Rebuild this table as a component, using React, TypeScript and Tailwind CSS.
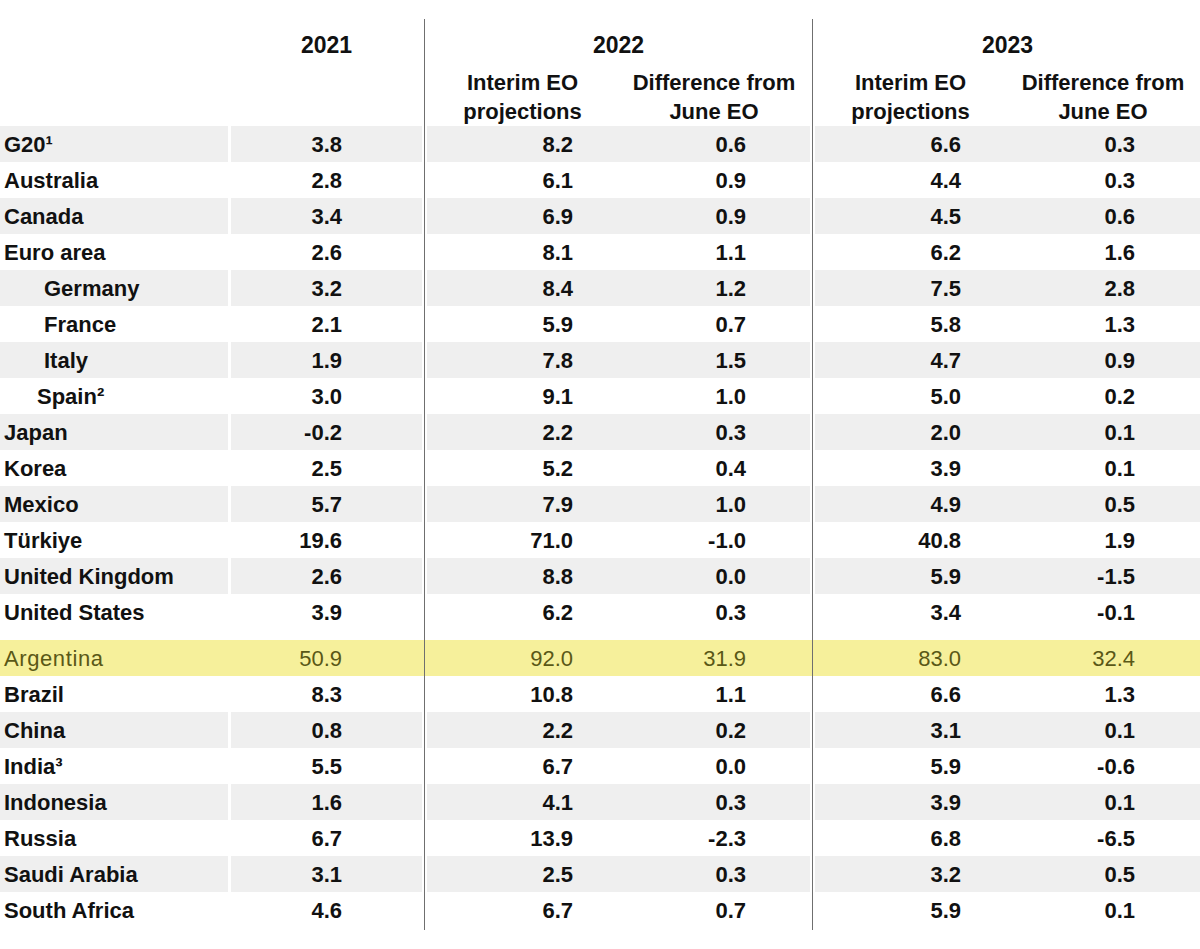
import React from "react";

type Row = {
  label: string;
  indent?: number;
  v: [string, string, string, string, string];
  shade: "gray" | "white" | "yellow";
};

const top: Row[] = [
  { label: "G20¹", v: ["3.8", "8.2", "0.6", "6.6", "0.3"], shade: "gray" },
  { label: "Australia", v: ["2.8", "6.1", "0.9", "4.4", "0.3"], shade: "white" },
  { label: "Canada", v: ["3.4", "6.9", "0.9", "4.5", "0.6"], shade: "gray" },
  { label: "Euro area", v: ["2.6", "8.1", "1.1", "6.2", "1.6"], shade: "white" },
  { label: "Germany", indent: 1, v: ["3.2", "8.4", "1.2", "7.5", "2.8"], shade: "gray" },
  { label: "France", indent: 1, v: ["2.1", "5.9", "0.7", "5.8", "1.3"], shade: "white" },
  { label: "Italy", indent: 1, v: ["1.9", "7.8", "1.5", "4.7", "0.9"], shade: "gray" },
  { label: "Spain²", indent: 2, v: ["3.0", "9.1", "1.0", "5.0", "0.2"], shade: "white" },
  { label: "Japan", v: ["-0.2", "2.2", "0.3", "2.0", "0.1"], shade: "gray" },
  { label: "Korea", v: ["2.5", "5.2", "0.4", "3.9", "0.1"], shade: "white" },
  { label: "Mexico", v: ["5.7", "7.9", "1.0", "4.9", "0.5"], shade: "gray" },
  { label: "Türkiye", v: ["19.6", "71.0", "-1.0", "40.8", "1.9"], shade: "white" },
  { label: "United Kingdom", v: ["2.6", "8.8", "0.0", "5.9", "-1.5"], shade: "gray" },
  { label: "United States", v: ["3.9", "6.2", "0.3", "3.4", "-0.1"], shade: "white" },
];

const bottom: Row[] = [
  { label: "Argentina", v: ["50.9", "92.0", "31.9", "83.0", "32.4"], shade: "yellow" },
  { label: "Brazil", v: ["8.3", "10.8", "1.1", "6.6", "1.3"], shade: "white" },
  { label: "China", v: ["0.8", "2.2", "0.2", "3.1", "0.1"], shade: "gray" },
  { label: "India³", v: ["5.5", "6.7", "0.0", "5.9", "-0.6"], shade: "white" },
  { label: "Indonesia", v: ["1.6", "4.1", "0.3", "3.9", "0.1"], shade: "gray" },
  { label: "Russia", v: ["6.7", "13.9", "-2.3", "6.8", "-6.5"], shade: "white" },
  { label: "Saudi Arabia", v: ["3.1", "2.5", "0.3", "3.2", "0.5"], shade: "gray" },
  { label: "South Africa", v: ["4.6", "6.7", "0.7", "5.9", "0.1"], shade: "white" },
];

function Line() {
  return <div className="w-px self-stretch bg-[#6f6f6f]" />;
}

function DataRow({ r }: { r: Row }) {
  const yellow = r.shade === "yellow";
  const cellBg = r.shade === "gray" ? "bg-[#efefef]" : "";
  const rowCls = yellow
    ? "flex h-[36px] bg-[#f6f09b] text-[#5a5817] font-normal"
    : "flex h-[36px]";
  const padL = r.indent === 1 ? "pl-[44px]" : r.indent === 2 ? "pl-[37px]" : "pl-[4px]";
  return (
    <div className={rowCls}>
      <div className={`w-[228px] flex items-center ${padL} ${cellBg} ${yellow ? "tracking-[0.6px]" : ""}`}>
        {r.label}
      </div>
      <div className="w-[3px]" />
      <div className={`w-[191px] flex items-center justify-end pr-[80px] ${cellBg}`}>{r.v[0]}</div>
      <div className="w-[2px]" />
      <Line />
      <div className="w-[2px]" />
      <div className={`w-[191px] flex items-center justify-end pr-[45px] ${cellBg}`}>{r.v[1]}</div>
      <div className={`w-[192px] flex items-center justify-end pr-[64px] ${cellBg}`}>{r.v[2]}</div>
      <div className="w-[2px]" />
      <Line />
      <div className="w-[2px]" />
      <div className={`w-[191px] flex items-center justify-end pr-[45px] ${cellBg}`}>{r.v[3]}</div>
      <div className={`w-[194px] flex items-center justify-end pr-[65px] ${cellBg}`}>{r.v[4]}</div>
    </div>
  );
}

function SubHead() {
  return (
    <div className="flex mt-[10px] leading-[29px]">
      <div className="w-[191px] text-center">
        <div>Interim EO</div>
        <div>projections</div>
      </div>
      <div className="flex-1 text-center">
        <div>Difference from</div>
        <div>June EO</div>
      </div>
    </div>
  );
}

export default function App() {
  return (
    <div className="w-[1200px] h-[949px] bg-white pt-[19px] font-['Liberation_Sans',Arial,sans-serif] font-bold text-[22px] text-[#111] overflow-hidden">
      <div className="flex h-[107px]">
        <div className="w-[228px]" />
        <div className="w-[3px]" />
        <div className="w-[191px] pt-[13px] text-center text-[23px] leading-[26px]">2021</div>
        <div className="w-[2px]" />
        <Line />
        <div className="w-[2px]" />
        <div className="w-[383px] flex flex-col pt-[13px]">
          <div className="text-center text-[23px] leading-[26px]">2022</div>
          <SubHead />
        </div>
        <div className="w-[2px]" />
        <Line />
        <div className="w-[2px]" />
        <div className="w-[385px] flex flex-col pt-[13px]">
          <div className="text-center text-[23px] leading-[26px]">2023</div>
          <SubHead />
        </div>
      </div>
      {top.map((r) => (
        <DataRow key={r.label} r={r} />
      ))}
      <div className="flex h-[10px]">
        <div className="w-[424px]" />
        <Line />
        <div className="w-[387px]" />
        <Line />
      </div>
      {bottom.map((r) => (
        <DataRow key={r.label} r={r} />
      ))}
      <div className="flex h-[2px]">
        <div className="w-[424px]" />
        <Line />
        <div className="w-[387px]" />
        <Line />
      </div>
    </div>
  );
}
